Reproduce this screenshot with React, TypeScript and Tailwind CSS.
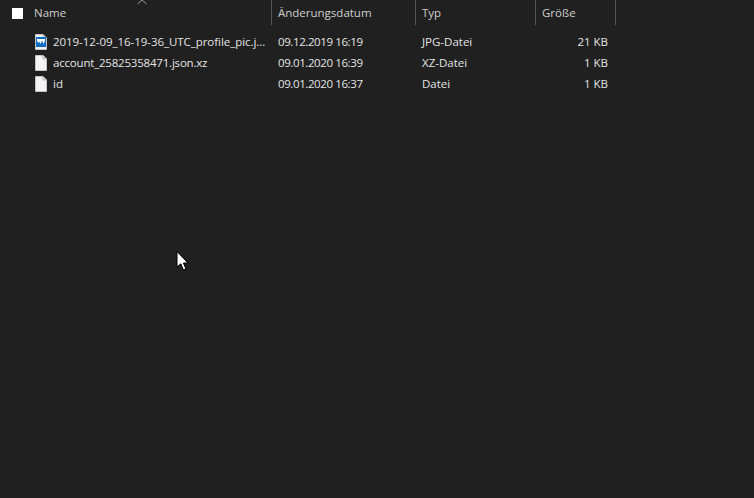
const files = [
  { name: "2019-12-09_16-19-36_UTC_profile_pic.j...", nameClass: "tracking-[-0.05px]", date: "09.12.2019 16:19", type: "JPG-Datei", size: "21 KB", image: true },
  { name: "account_25825358471.json.xz", nameClass: "tracking-[-0.2px]", date: "09.01.2020 16:39", type: "XZ-Datei", size: "1 KB", image: false },
  { name: "id", nameClass: "", date: "09.01.2020 16:37", type: "Datei", size: "1 KB", image: false },
];

function FileIcon({ image }: { image: boolean }) {
  return (
    <svg width="12" height="16" viewBox="0 0 12 16" className="shrink-0">
      <path d="M0.5 0.5H8L11.5 4V15.5H0.5Z" fill="#f4f4f4" stroke="#c4c4c4" />
      <path d="M8 0.5V4H11.5" fill="#d8d8d8" stroke="#b8b8b8" />
      {image && (
        <>
          <rect x="1" y="3" width="10" height="10" fill="#0f6fc6" />
          <path d="M2 5H10V7L8.5 10L7 6.5L5.5 10L4.5 7.5L3.5 9L2 7Z" fill="#ffffff" />
        </>
      )}
    </svg>
  );
}

export default function App() {
  return (
    <div className="relative w-[754px] h-[498px] overflow-hidden bg-[#202020] text-[11.5px] font-['Open_Sans',sans-serif] text-[#e4e4e4]">
      <div className="absolute left-[137px] top-[-1px]">
        <svg width="10" height="6" viewBox="0 0 10 6">
          <path d="M0.5 5L5 1L9.5 5" fill="none" stroke="#9a9a9a" />
        </svg>
      </div>

      {/* Header */}
      <div className="flex h-[25px] text-[#cfcfcf]">
        <div className="flex items-center w-[272px] pl-3 pt-[1px] border-r border-[#555555]">
          <div className="w-[11px] h-[11px] bg-white" />
          <span className="ml-[11px]">Name</span>
        </div>
        <div className="flex items-center w-[144px] pl-[6px] pt-[1px] border-r border-[#555555]">Änderungsdatum</div>
        <div className="flex items-center w-[120px] pl-[6px] pt-[1px] border-r border-[#555555]">Typ</div>
        <div className="flex items-center w-[80px] pl-[6px] pt-[1px] border-r border-[#555555]">Größe</div>
      </div>

      {/* Rows */}
      <div className="flex flex-col pt-[6px]">
        {files.map((file) => (
          <div key={file.name} className="flex items-center h-[21px] whitespace-nowrap">
            <div className="flex items-center w-[272px] pl-[35px]">
              <FileIcon image={file.image} />
              <span className={`ml-[6px] ${file.nameClass}`}>{file.name}</span>
            </div>
            <div className="w-[144px] pl-[6px] tracking-[-0.4px]">{file.date}</div>
            <div className="w-[120px] pl-[6px]">{file.type}</div>
            <div className="w-[72px] text-right">{file.size}</div>
          </div>
        ))}
      </div>

      {/* Mouse cursor */}
      <div className="absolute left-[175px] top-[250px]">
        <svg width="15" height="22" viewBox="0 0 15 22">
          <path d="M2 1.5V17L5.8 13.8L8.4 20L11 19L8.4 13H13Z" fill="#ffffff" stroke="#000000" strokeWidth="1" />
        </svg>
      </div>
    </div>
  );
}
